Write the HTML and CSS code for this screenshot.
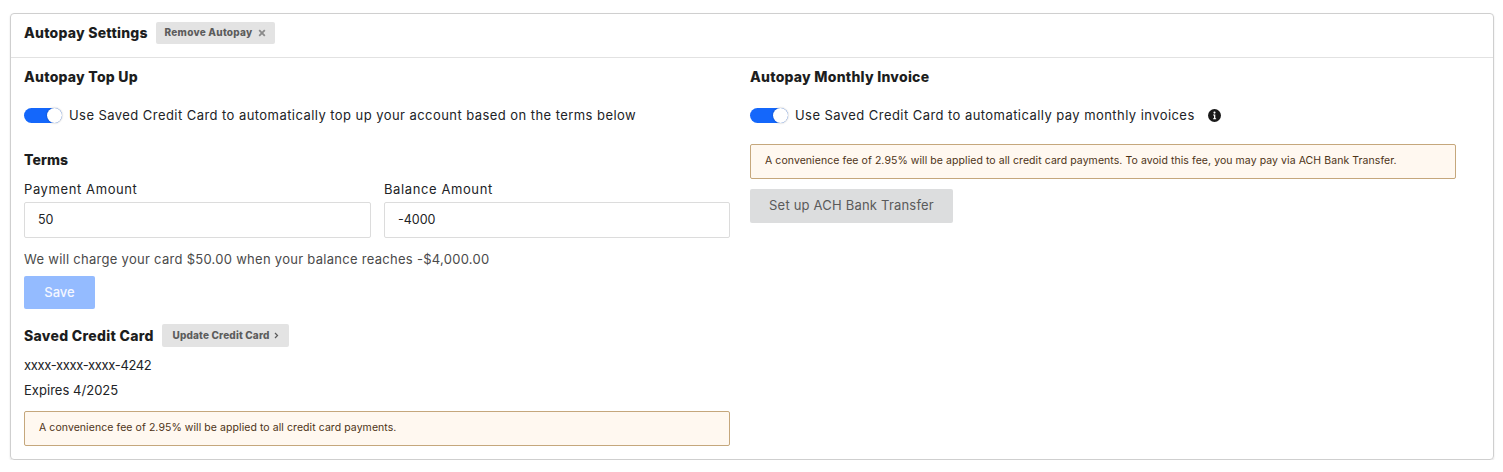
FILE: index.html
```html
<!DOCTYPE html>
<html lang="en">
<head>
  <meta charset="UTF-8" />
  <title>Autopay Settings</title>
  <link rel="stylesheet" href="styles.css">
</head>
<body>
  <div class="card">
    <div class="card-header">
      <h2>Autopay Settings</h2>
      <span class="tag tag-remove">Remove Autopay
        <svg class="tag-x" viewBox="0 0 8 8" width="8" height="8"><path d="M1.2 1.2l5.6 5.6M6.8 1.2L1.2 6.8" /></svg>
      </span>
    </div>
    <div class="card-body">
      <div class="col">
        <h3 class="section-title">Autopay Top Up</h3>
        <div class="toggle-row">
          <span class="toggle"><span class="knob"></span></span>
          <span class="toggle-label">Use Saved Credit Card to automatically top up your account based on the terms below</span>
        </div>
        <h3 class="terms-title">Terms</h3>
        <div class="fields">
          <label class="field">
            <span class="field-label">Payment Amount</span>
            <input class="input" type="text" value="50" />
          </label>
          <label class="field">
            <span class="field-label">Balance Amount</span>
            <input class="input" type="text" value="-4000" />
          </label>
        </div>
        <p class="summary">We will charge your card $50.00 when your balance reaches -$4,000.00</p>
        <button class="btn btn-save">Save</button>
        <div class="saved-head">
          <h3>Saved Credit Card</h3>
          <span class="tag tag-update">Update Credit Card
            <svg class="chev" viewBox="0 0 6 8" width="5" height="7"><path d="M1.2 1l3 3-3 3" /></svg>
          </span>
        </div>
        <p class="card-number">xxxx-xxxx-xxxx-4242</p>
        <p class="card-expiry">Expires 4/2025</p>
        <div class="alert">A convenience fee of 2.95% will be applied to all credit card payments.</div>
      </div>
      <div class="col">
        <h3 class="section-title">Autopay Monthly Invoice</h3>
        <div class="toggle-row">
          <span class="toggle"><span class="knob"></span></span>
          <span class="toggle-label">Use Saved Credit Card to automatically pay monthly invoices</span>
          <svg class="info" viewBox="0 0 16 16" width="13" height="13">
            <circle cx="8" cy="8" r="8" fill="#1a1a1a" />
            <circle cx="8" cy="4.4" r="1.3" fill="#fff" />
            <path d="M6.3 6.9h2.7v4.6h1v1.1H6.3v-1.1h1.1V8H6.3z" fill="#fff" />
          </svg>
        </div>
        <div class="alert alert-top">A convenience fee of 2.95% will be applied to all credit card payments. To avoid this fee, you may pay via ACH Bank Transfer.</div>
        <button class="btn btn-ach">Set up ACH Bank Transfer</button>
      </div>
    </div>
  </div>
</body>
</html>
```

FILE: styles.css
```css
html, body {
  margin: 0;
  padding: 0;
  background: #fff;
  font-family: 'Inter', 'Open Sans', sans-serif;
  color: #212326;
}

body {
  padding: 13px 9px 0 10px;
}

h2, h3, p {
  margin: 0;
}

.card {
  height: 447px;
  box-sizing: border-box;
  border: 1px solid #cfcfcf;
  border-radius: 4px;
  box-shadow: 0 1px 2px rgba(0, 0, 0, 0.12);
}

.card-header {
  padding: 8px 13px 13px;
  display: flex;
  align-items: center;
  gap: 8px;
  border-bottom: 1px solid #e2e2e2;
}

.card-header h2 {
  font-size: 14px;
  font-weight: 800;
  line-height: 20px;
  letter-spacing: 0.24px;
  color: #1c1d20;
  width: 124px;
  white-space: nowrap;
}

.tag {
  display: inline-flex;
  align-items: center;
  justify-content: center;
  gap: 6px;
  box-sizing: border-box;
  height: 22px;
  padding-bottom: 2px;
  background: #e3e3e3;
  border-radius: 2px;
  color: #5c5c5c;
  font-size: 10px;
  font-weight: 800;
  letter-spacing: 0.25px;
  white-space: nowrap;
}

.tag-remove {
  width: 119px;
}

.tag-x {
  fill: none;
  stroke: #8a8a8a;
  stroke-width: 1.8;
  margin-top: 1px;
}

.card-body {
  display: grid;
  grid-template-columns: 706px 706px;
  gap: 20px;
  padding: 9px 13px 0;
}

.section-title {
  font-size: 14px;
  font-weight: 800;
  line-height: 20px;
  letter-spacing: 0.25px;
  color: #1c1d20;
}

.toggle-row {
  display: flex;
  align-items: center;
  margin-top: 18px;
  height: 20px;
}

.toggle {
  width: 38px;
  height: 15px;
  border-radius: 8px;
  background: #1467fb;
  position: relative;
  flex: none;
}

.knob {
  position: absolute;
  top: 0;
  right: 0;
  width: 15px;
  height: 15px;
  border-radius: 50%;
  background: #fff;
  box-shadow: 0 0 2px rgba(0, 0, 0, 0.35);
}

.toggle-label {
  margin-left: 7px;
  font-size: 13px;
  line-height: 20px;
  letter-spacing: 0.44px;
  white-space: nowrap;
}

.info {
  margin-left: 13px;
}

.terms-title {
  margin-top: 25px;
  font-size: 14px;
  font-weight: 800;
  line-height: 20px;
  letter-spacing: 0.1px;
  color: #1c1d20;
}

.fields {
  display: grid;
  grid-template-columns: 347px 346px;
  gap: 13px;
  margin-top: 9px;
}

.field {
  display: block;
}

.field-label {
  display: block;
  font-size: 13px;
  line-height: 20px;
  letter-spacing: 0.6px;
  margin-bottom: 3px;
}

.input {
  display: block;
  width: 100%;
  height: 36px;
  box-sizing: border-box;
  border: 1px solid #dcdcdc;
  border-radius: 2px;
  padding: 0 13px 2px;
  font-family: inherit;
  font-size: 12.5px;
  color: #212326;
  outline: none;
}

.summary {
  margin-top: 11px;
  font-size: 13px;
  line-height: 20px;
  color: #4a4a4a;
  letter-spacing: 0.28px;
}

.btn {
  display: block;
  border: none;
  border-radius: 2px;
  font-family: inherit;
  font-size: 13px;
  padding: 0 0 2px;
}

.btn-save {
  margin-top: 7px;
  width: 71px;
  height: 33px;
  background: #94bbff;
  color: #f4f7ff;
  font-weight: 500;
}

.saved-head {
  display: flex;
  align-items: center;
  gap: 8px;
  margin-top: 15px;
  height: 23px;
}

.saved-head h3 {
  font-size: 14px;
  font-weight: 800;
  line-height: 20px;
  letter-spacing: 0.3px;
  color: #1c1d20;
  width: 130px;
  white-space: nowrap;
}

.tag-update {
  width: 127px;
  height: 23px;
  gap: 4px;
  letter-spacing: 0.17px;
}

.chev {
  fill: none;
  stroke: #5c5c5c;
  stroke-width: 1.5;
  margin-top: 1px;
}

.card-number {
  margin-top: 8px;
  font-size: 13px;
  line-height: 20px;
  letter-spacing: -0.35px;
}

.card-expiry {
  margin-top: 5px;
  font-size: 13px;
  line-height: 20px;
  letter-spacing: 0.03px;
}

.alert {
  margin-top: 11px;
  height: 35px;
  box-sizing: border-box;
  display: flex;
  align-items: center;
  padding: 0 14px 2px;
  border: 1px solid #c5a77c;
  border-radius: 2px;
  background: #fff8f0;
  color: #4d3316;
  font-size: 10.5px;
  letter-spacing: 0.07px;
  white-space: nowrap;
}

.alert-top {
  margin-top: 19px;
}

.btn-ach {
  margin-top: 10px;
  width: 203px;
  height: 34px;
  background: #dcddde;
  color: #5a5a5a;
  letter-spacing: 0.2px;
}
```
